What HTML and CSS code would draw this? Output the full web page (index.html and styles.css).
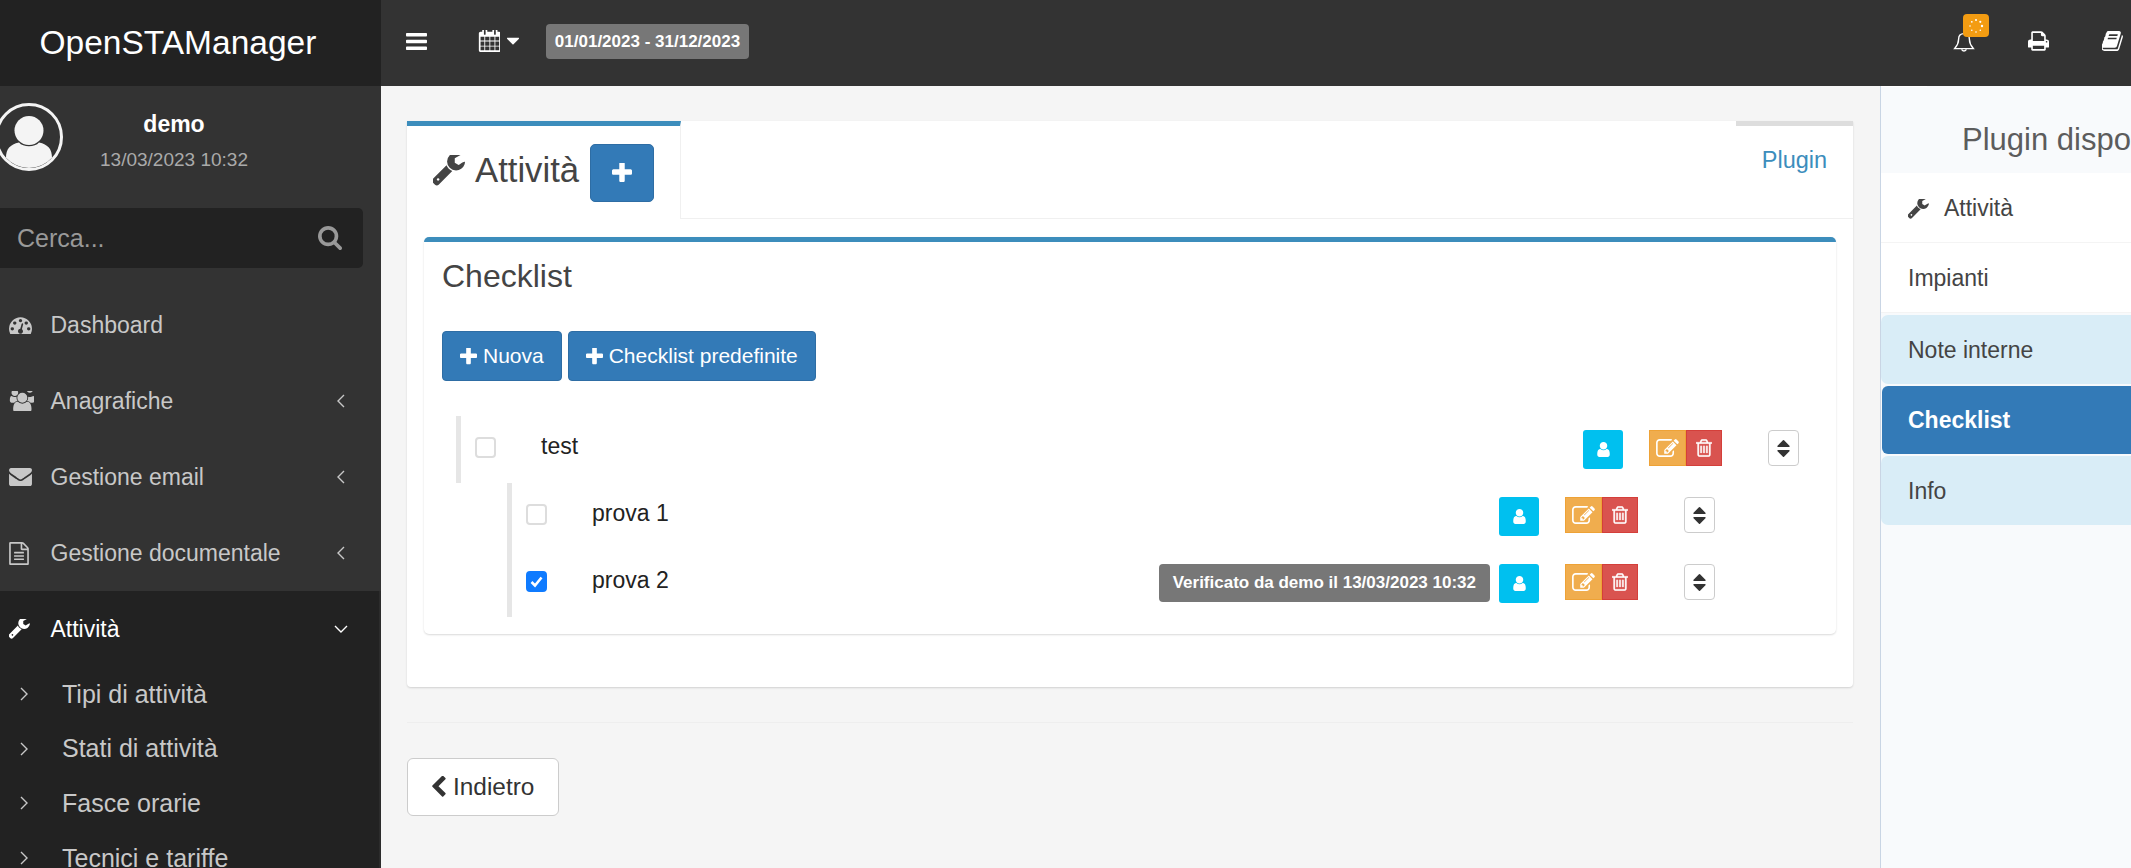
FILE: index.html
```html
<!DOCTYPE html>
<html lang="it">
<head>
<meta charset="utf-8">
<title>OpenSTAManager</title>
<link rel="stylesheet" href="styles.css">
</head>
<body>
<svg class="defs" xmlns="http://www.w3.org/2000/svg">
  <symbol id="i-wrench" viewBox="64 128 1600 1536"><path d="M384 1344q0-26-19-45t-45-19-45 19-19 45 19 45 45 19 45-19 19-45zm644-420l-682 682q-37 37-90 37-52 0-91-37l-106-108q-38-36-38-90 0-53 38-91l681-681q39 98 114.500 173.500t173.500 114.500zm634-435q0 39-23 106-47 134-164.500 217.500t-258.500 83.500q-185 0-316.500-131.500t-131.500-316.500 131.500-316.500 316.500-131.500q58 0 121.500 16.500t107.500 46.500q16 11 16 28t-16 28l-293 169v224l193 107q5-3 79-48.500t135.500-81 70.500-35.500q15 0 23.500 10t8.500 25z"/></symbol>
  <symbol id="i-plus" viewBox="192 192 1408 1408"><path d="M1600 736v192q0 40-28 68t-68 28h-416v416q0 40-28 68t-68 28h-192q-40 0-68-28t-28-68v-416h-416q-40 0-68-28t-28-68v-192q0-40 28-68t68-28h416v-416q0-40 28-68t68-28h192q40 0 68 28t28 68v416h416q40 0 68 28t28 68z"/></symbol>
  <symbol id="i-bars" viewBox="128 256 1536 1280" preserveAspectRatio="none"><path d="M1664 1344v128q0 26-19 45t-45 19h-1408q-26 0-45-19t-19-45v-128q0-26 19-45t45-19h1408q26 0 45 19t19 45zm0-512v128q0 26-19 45t-45 19h-1408q-26 0-45-19t-19-45v-128q0-26 19-45t45-19h1408q26 0 45 19t19 45zm0-512v128q0 26-19 45t-45 19h-1408q-26 0-45-19t-19-45v-128q0-26 19-45t45-19h1408q26 0 45 19t19 45z"/></symbol>
  <symbol id="i-search" viewBox="64 128 1664 1664"><path d="M1216 832q0-185-131.500-316.500t-316.500-131.500-316.500 131.500-131.500 316.500 131.500 316.500 316.500 131.500 316.500-131.500 131.500-316.500zm512 832q0 52-38 90t-90 38q-54 0-90-38l-343-342q-179 124-399 124-143 0-273.500-55.500t-225-150-150-225-55.500-273.500 55.500-273.500 150-225 225-150 273.500-55.500 273.500 55.500 225 150 150 225 55.500 273.500q0 220-124 399l343 343q37 37 37 90z"/></symbol>
  <symbol id="i-envelope" viewBox="0 256 1792 1408"><path d="M1792 710v794q0 66-47 113t-113 47h-1472q-66 0-113-47t-47-113v-794q44 49 101 87 362 246 497 345 57 42 92.500 65.500t94.500 48 110 24.500h2q51 0 110-24.500t94.500-48 92.500-65.500q170-123 498-345 57-39 100-87zm0-294q0 79-49 151t-122 123q-376 261-468 325-10 7-42.500 30.500t-54 38-52 32.500-57.500 27-50 9h-2q-23 0-50-9t-57.500-27-52-32.500-54-38-42.500-30.500q-91-64-262-182.500t-205-142.500q-62-42-117-115.500t-55-136.500q0-78 41.500-130t118.500-52h1472q65 0 112.500 47t47.500 113z"/></symbol>
  <symbol id="i-trash" viewBox="192 128 1408 1536"><path d="M704 736v576q0 14-9 23t-23 9h-64q-14 0-23-9t-9-23v-576q0-14 9-23t23-9h64q14 0 23 9t9 23zm256 0v576q0 14-9 23t-23 9h-64q-14 0-23-9t-9-23v-576q0-14 9-23t23-9h64q14 0 23 9t9 23zm256 0v576q0 14-9 23t-23 9h-64q-14 0-23-9t-9-23v-576q0-14 9-23t23-9h64q14 0 23 9t9 23zm128 724v-948h-896v948q0 22 7 40.500t14.500 27 10.500 8.500h832q3 0 10.500-8.500t14.500-27 7-40.500zm-672-1076h448l-48-117q-7-9-17-11h-317q-10 2-17 11zm928 32v64q0 14-9 23t-23 9h-96v948q0 83-47 143.500t-113 60.500h-832q-66 0-113-58.500t-47-141.500v-952h-96q-14 0-23-9t-9-23v-64q0-14 9-23t23-9h309l70-167q15-37 54-63t79-26h320q40 0 79 26t54 63l70 167h309q14 0 23 9t9 23z"/></symbol>
  <symbol id="i-chevron-left" viewBox="320 128 1152 1536"><path d="M1427 301l-531 531 531 531q19 19 19 45t-19 45l-166 166q-19 19-45 19t-45-19l-742-742q-19-19-19-45t19-45l742-742q19-19 45-19t45 19l166 166q19 19 19 45t-19 45z"/></symbol>
  <symbol id="i-user" viewBox="256 128 1280 1536"><path d="M1536 1399q0 109-62.500 187t-150.500 78h-854q-88 0-150.500-78t-62.500-187q0-85 8.500-160.500t31.500-152 58.500-131 94-89 134.500-34.500q131 128 313 128t313-128q76 0 134.500 34.500t94 89 58.500 131 31.500 152 8.500 160.500zm-256-887q0 159-112.500 271.500t-271.500 112.500-271.500-112.500-112.500-271.500 112.500-271.500 271.500-112.500 271.500 112.500 112.500 271.500z"/></symbol>
  <symbol id="i-edit" viewBox="0 128 1792 1408"><path d="M888 1184l116-116-152-152-116 116v56h96v96h56zm440-720q-16-16-33 1l-350 350q-17 17-1 33t33-1l350-350q17-17 1-33zm80 594v190q0 119-84.500 203.500t-203.500 84.500h-832q-119 0-203.500-84.500t-84.500-203.500v-832q0-119 84.500-203.500t203.500-84.500h832q63 0 117 25 15 7 18 23 3 17-9 29l-49 49q-14 14-32 8-23-6-45-6h-832q-66 0-113 47t-47 113v832q0 66 47 113t113 47h832q66 0 113-47t47-113v-126q0-13 9-22l64-64q15-15 35-7t20 29zm-96-738l288 288-672 672h-288v-288zm444 132l-92 92-288-288 92-92q28-28 68-28t68 28l152 152q28 28 28 68t-28 68z"/></symbol>
  <symbol id="i-sort" viewBox="384 192 1024 1408"><path d="M1408 1088q0 26-19 45l-448 448q-19 19-45 19t-45-19l-448-448q-19-19-19-45t19-45 45-19h896q26 0 45 19t19 45zm0-384q0 26-19 45t-45 19h-896q-26 0-45-19t-19-45 19-45l448-448q19-19 45-19t45 19l448 448q19 19 19 45z"/></symbol>
  <symbol id="i-caret" viewBox="384 640 1024 576"><path d="M1408 704q0 26-19 45l-448 448q-19 19-45 19t-45-19l-448-448q-19-19-19-45t19-45 45-19h896q26 0 45 19t19 45z"/></symbol>
  <symbol id="i-calendar" viewBox="0 128 1664 1664"><path d="M192 1664h288v-288h-288v288zm352 0h320v-288h-320v288zm-352-352h288v-320h-288v320zm352 0h320v-320h-320v320zm-352-384h288v-288h-288v288zm736 736h320v-288h-320v288zm-384-736h320v-288h-320v288zm768 736h288v-288h-288v288zm-384-352h320v-320h-320v320zm-352-864v-288q0-13-9.500-22.500t-22.500-9.500h-64q-13 0-22.500 9.500t-9.500 22.500v288q0 13 9.500 22.500t22.500 9.500h64q13 0 22.500-9.500t9.500-22.500zm736 864h288v-320h-288v320zm-384-384h320v-288h-320v288zm384 0h288v-288h-288v288zm32-480v-288q0-13-9.500-22.500t-22.500-9.500h-64q-13 0-22.500 9.500t-9.500 22.500v288q0 13 9.500 22.500t22.500 9.500h64q13 0 22.500-9.500t9.500-22.500zm384-64v1280q0 52-38 90t-90 38h-1408q-52 0-90-38t-38-90v-1280q0-52 38-90t90-38h128v-96q0-66 47-113t113-47h64q66 0 113 47t47 113v96h384v-96q0-66 47-113t113-47h64q66 0 113 47t47 113v96h128q52 0 90 38t38 90z"/></symbol>
  <symbol id="i-users" viewBox="-128 128 1920 1536"><path d="M529 896q-162 5-265 128h-134q-82 0-138-40.500t-56-118.500q0-353 124-353 6 0 43.500 21t97.500 42.500 119 21.500q67 0 133-23-5 37-5 66 0 139 81 256zm1071 637q0 120-73 189.500t-194 69.500h-874q-121 0-194-69.500t-73-189.500q0-53 3.500-103.500t14-109 26.500-108.500 43-97.500 62-81 85.500-53.500 111.500-20q10 0 43 21.500t73 48 107 48 135 21.500 135-21.500 107-48 73-48 43-21.500q61 0 111.500 20t85.500 53.500 62 81 43 97.500 26.500 108.500 14 109 3.500 103.500zm-1024-1277q0 106-75 181t-181 75-181-75-75-181 75-181 181-75 181 75 75 181zm704 384q0 159-112.500 271.500t-271.500 112.500-271.500-112.500-112.500-271.500 112.500-271.500 271.500-112.500 271.500 112.500 112.500 271.500zm576 225q0 78-56 118.500t-138 40.500h-134q-103-123-265-128 81-117 81-256 0-29-5-66 66 23 133 23 59 0 119-21.500t97.500-42.500 43.500-21q124 0 124 353zm-128-865q0 106-75 181t-181 75-181-75-75-181 75-181 181-75 181 75 75 181z"/></symbol>
  <symbol id="i-dashboard" viewBox="0 256 1792 1280"><path d="M384 1152q0-53-37.500-90.500t-90.500-37.500-90.500 37.500-37.500 90.500 37.500 90.500 90.500 37.500 90.500-37.500 37.500-90.500zm192-448q0-53-37.500-90.500t-90.500-37.500-90.500 37.500-37.500 90.500 37.500 90.500 90.500 37.500 90.500-37.500 37.500-90.500zm428 481l101-382q6-26-7.500-48.500t-38.500-29.500-48 6.500-30 39.500l-101 382q-60 5-107 43.500t-63 98.500q-20 77 20 146t117 89 146-20 89-117q16-60-6-117t-72-91zm660-33q0-53-37.500-90.500t-90.500-37.500-90.500 37.500-37.500 90.500 37.500 90.500 90.500 37.500 90.500-37.500 37.500-90.500zm-640-640q0-53-37.500-90.500t-90.500-37.500-90.500 37.500-37.500 90.500 37.500 90.500 90.500 37.500 90.500-37.500 37.500-90.500zm448 192q0-53-37.500-90.500t-90.500-37.500-90.500 37.500-37.500 90.500 37.500 90.500 90.500 37.500 90.500-37.500 37.500-90.500zm320 448q0 261-141 483-19 29-54 29h-1402q-35 0-54-29-141-221-141-483 0-182 71-348t191-286 286-191 348-71 348 71 286 191 191 286 71 348z"/></symbol>
  <symbol id="i-file" viewBox="128 0 1536 1792"><path d="M1596 380q28 28 48 76t20 88v1152q0 40-28 68t-68 28h-1344q-40 0-68-28t-28-68v-1600q0-40 28-68t68-28h896q40 0 88 20t76 48zm-444-244v376h376q-10-29-22-41l-313-313q-12-12-41-22zm384 1528v-1024h-416q-40 0-68-28t-28-68v-416h-768v1536h1280zm-1024-864q0-14 9-23t23-9h704q14 0 23 9t9 23v64q0 14-9 23t-23 9h-704q-14 0-23-9t-9-23v-64zm736 224q14 0 23 9t9 23v64q0 14-9 23t-23 9h-704q-14 0-23-9t-9-23v-64q0-14 9-23t23-9h704zm0 256q14 0 23 9t9 23v64q0 14-9 23t-23 9h-704q-14 0-23-9t-9-23v-64q0-14 9-23t23-9h704z"/></symbol>
  <symbol id="i-print" viewBox="64 128 1664 1536"><path d="M448 1536h896v-256h-896v256zm0-640h896v-384h-160q-40 0-68-28t-28-68v-160h-640v640zm1152 64q0-26-19-45t-45-19-45 19-19 45 19 45 45 19 45-19 19-45zm128 0v416q0 13-9.500 22.500t-22.500 9.500h-224v160q0 40-28 68t-68 28h-960q-40 0-68-28t-28-68v-160h-224q-13 0-22.500-9.500t-9.500-22.500v-416q0-79 56.500-135.500t135.500-56.500h64v-544q0-40 28-68t68-28h672q40 0 88 20t76 48l152 152q28 28 48 76t20 88v256h64q79 0 135.500 56.500t56.500 135.500z"/></symbol>
  <symbol id="i-book" viewBox="64 128 1600 1536"><path d="M1639 478q40 57 18 129l-275 906q-19 64-76.500 107.500t-122.500 43.500h-923q-77 0-148.500-53.500t-99.500-131.500q-24-67-2-127 0-4 3-27t4-37q1-8-3-21.500t-3-19.500q2-11 8-21t16.500-23.500 16.500-23.500q23-38 45-91.500t30-91.500q3-10 .5-30t-.5-28q3-11 17-28t17-23q21-36 42-92t25-90q1-9-2.500-32t.5-28q4-13 22-30.500t22-22.500q19-26 42.500-84.500t27.500-96.500q1-8-3-25.500t-2-26.500q2-8 9-18t18-23 17-21q8-12 16.500-30.500t15-35 16-36 19.500-32 26.500-23.500 36-11.500 47.500 5.500l-1 3q38-9 51-9h761q74 0 114 56t18 130l-274 906q-36 119-71.500 153.500t-128.500 34.500h-869q-27 0-38 15-11 16-1 43 24 70 144 70h923q29 0 56-15.500t35-41.500l300-987q7-22 5-57 38 15 59 43zm-1064 2q-4 13 2 22.500t20 9.500h608q13 0 25.500-9.500t16.500-22.500l21-64q4-13-2-22.500t-20-9.500h-608q-13 0-25.500 9.500t-16.500 22.500zm-83 256q-4 13 2 22.500t20 9.500h608q13 0 25.500-9.500t16.500-22.500l21-64q4-13-2-22.500t-20-9.500h-608q-13 0-25.500 9.500t-16.500 22.500z"/></symbol>
</svg>

<header class="topbar">
  <a class="logo">OpenSTAManager</a>
  <nav class="topnav">
    <svg class="ic-bars"><use href="#i-bars"/></svg>
    <svg class="ic-calendar"><use href="#i-calendar"/></svg>
    <svg class="ic-caret"><use href="#i-caret"/></svg>
    <span class="date-range">01/01/2023 - 31/12/2023</span>
    <div class="top-right">
      <span class="bell">
        <svg class="ic-bell" viewBox="0 0 22 22"><path d="M11 2.600C7.600 2.600 5.600 5 5.600 8.200 5.600 13 3.400 15.400 1.600 17.600H20.400C18.600 15.400 16.400 13 16.400 8.200 16.400 5 14.400 2.600 11 2.600Z"/><path d="M8.800 18.200C9 20.600 13 20.600 13.200 18.200"/></svg>
        <span class="badge">
          <svg class="ic-spin" viewBox="0 0 16 16"><circle cx="8" cy="2" r="1"/><circle cx="12.300" cy="3.800" r="1.100"/><circle cx="14" cy="8" r="1.200"/><circle cx="12.300" cy="12.200" r=".8"/><circle cx="8" cy="14" r=".8"/><circle cx="3.800" cy="12.200" r=".8"/><circle cx="2" cy="8" r=".8"/><circle cx="3.800" cy="3.800" r=".9"/></svg>
        </span>
      </span>
      <svg class="ic-print"><use href="#i-print"/></svg>
      <svg class="ic-book"><use href="#i-book"/></svg>
    </div>
  </nav>
</header>

<div class="layout">
  <aside class="sidebar">
    <div class="user">
      <svg class="avatar" viewBox="0 0 68 68">
        <circle cx="34" cy="34" r="32.500" class="avatar-ring"/>
        <circle cx="34" cy="27.500" r="14.500"/>
        <path d="M11 54.800C11 46 15 41.500 24 39.500 28 44.500 40 44.500 44 39.500 53 41.500 57 46 57 54.800A31 31 0 0 1 11 54.800Z"/>
      </svg>
      <div class="user-info">
        <div class="user-name">demo</div>
        <div class="user-date">13/03/2023 10:32</div>
      </div>
    </div>
    <div class="search">
      <span>Cerca...</span>
      <svg class="ic-search"><use href="#i-search"/></svg>
    </div>
    <ul class="menu">
      <li class="menu-item"><span class="menu-ic"><svg class="ic-gauge"><use href="#i-dashboard"/></svg></span>Dashboard</li>
      <li class="menu-item"><span class="menu-ic"><svg class="ic-users"><use href="#i-users"/></svg></span>Anagrafiche<svg class="chev-left" viewBox="0 0 8 14"><path d="M7 1 1 7l6 6"/></svg></li>
      <li class="menu-item"><span class="menu-ic"><svg class="ic-mail"><use href="#i-envelope"/></svg></span>Gestione email<svg class="chev-left" viewBox="0 0 8 14"><path d="M7 1 1 7l6 6"/></svg></li>
      <li class="menu-item"><span class="menu-ic"><svg class="ic-file"><use href="#i-file"/></svg></span>Gestione documentale<svg class="chev-left" viewBox="0 0 8 14"><path d="M7 1 1 7l6 6"/></svg></li>
      <li class="menu-active">
        <div class="menu-item menu-item-active"><span class="menu-ic"><svg class="ic-wrench-nav"><use href="#i-wrench"/></svg></span>Attività<svg class="chev-down" viewBox="0 0 14 8"><path d="M1 1l6 6 6-6"/></svg></div>
        <ul class="submenu">
          <li class="sub-item"><svg class="chev-right" viewBox="0 0 8 14"><path d="M1 1l6 6-6 6"/></svg>Tipi di attività</li>
          <li class="sub-item"><svg class="chev-right" viewBox="0 0 8 14"><path d="M1 1l6 6-6 6"/></svg>Stati di attività</li>
          <li class="sub-item"><svg class="chev-right" viewBox="0 0 8 14"><path d="M1 1l6 6-6 6"/></svg>Fasce orarie</li>
          <li class="sub-item"><svg class="chev-right" viewBox="0 0 8 14"><path d="M1 1l6 6-6 6"/></svg>Tecnici e tariffe</li>
        </ul>
      </li>
    </ul>
  </aside>

  <main class="content">
    <section class="tabs">
      <div class="tab-head">
        <div class="tab-title">
          <svg class="ic-wrench-title"><use href="#i-wrench"/></svg>
          <span class="tab-title-text">Attività</span>
          <a class="btn-add"><svg class="ic-plus-lg"><use href="#i-plus"/></svg></a>
        </div>
        <div class="tab-gap"></div>
        <a class="tab-plugin">Plugin</a>
      </div>
      <div class="tab-body">
        <div class="box">
          <h3 class="box-title">Checklist</h3>
          <div class="box-buttons">
            <a class="btn-primary"><svg class="ic-plus"><use href="#i-plus"/></svg>Nuova</a>
            <a class="btn-primary"><svg class="ic-plus"><use href="#i-plus"/></svg>Checklist predefinite</a>
          </div>
          <div class="check-list">
            <div class="check-row">
              <span class="check"></span>
              <span class="check-text">test</span>
              <div class="actions">
                <a class="btn-info"><svg class="ic-user"><use href="#i-user"/></svg></a>
                <div class="btn-pair">
                  <a class="btn-edit"><svg class="ic-edit"><use href="#i-edit"/></svg></a>
                  <a class="btn-del"><svg class="ic-trash"><use href="#i-trash"/></svg></a>
                </div>
                <a class="btn-sort"><svg class="ic-sort"><use href="#i-sort"/></svg></a>
              </div>
            </div>
            <div class="check-sub">
              <div class="check-row check-row-sub">
                <span class="check"></span>
                <span class="check-text">prova 1</span>
                <div class="actions">
                  <a class="btn-info"><svg class="ic-user"><use href="#i-user"/></svg></a>
                  <div class="btn-pair">
                    <a class="btn-edit"><svg class="ic-edit"><use href="#i-edit"/></svg></a>
                    <a class="btn-del"><svg class="ic-trash"><use href="#i-trash"/></svg></a>
                  </div>
                  <a class="btn-sort"><svg class="ic-sort"><use href="#i-sort"/></svg></a>
                </div>
              </div>
              <div class="check-row check-row-sub">
                <span class="check check-on"><svg viewBox="0 0 21 21"><path d="M5.500 11l3.500 3.500 6.500-8"/></svg></span>
                <span class="check-text">prova 2</span>
                <div class="actions">
                  <span class="verified">Verificato da demo il 13/03/2023 10:32</span>
                  <a class="btn-info"><svg class="ic-user"><use href="#i-user"/></svg></a>
                  <div class="btn-pair">
                    <a class="btn-edit"><svg class="ic-edit"><use href="#i-edit"/></svg></a>
                    <a class="btn-del"><svg class="ic-trash"><use href="#i-trash"/></svg></a>
                  </div>
                  <a class="btn-sort"><svg class="ic-sort"><use href="#i-sort"/></svg></a>
                </div>
              </div>
            </div>
          </div>
        </div>
      </div>
    </section>
    <hr class="divider">
    <a class="btn-back"><svg class="ic-back"><use href="#i-chevron-left"/></svg>Indietro</a>
  </main>

  <aside class="plugins">
    <div class="plugins-notch"></div>
    <h4 class="plugins-title">Plugin disponibili</h4>
    <ul class="plugin-list">
      <li class="plugin plugin-plain"><svg class="ic-wrench-plugin"><use href="#i-wrench"/></svg>Attività</li>
      <li class="plugin plugin-plain plugin-last">Impianti</li>
      <li class="plugin plugin-light">Note interne</li>
      <li class="plugin plugin-current">Checklist</li>
      <li class="plugin plugin-light">Info</li>
    </ul>
  </aside>
</div>
</body>
</html>
```

FILE: styles.css
```css
* { box-sizing: border-box; }
html, body { margin: 0; height: 100%; }
body {
  overflow: hidden;
  font-family: "Liberation Sans", Arial, sans-serif;
  font-size: 23px;
  color: #333;
  background: #f5f5f5;
}
ul { list-style: none; margin: 0; padding: 0; }
.defs { display: none; }
svg { fill: currentColor; flex: none; display: block; }

/* top bar */
.topbar { display: flex; height: 86px; background: #333; color: #fff; }
.logo {
  width: 381px; flex: none; background: #222; color: #fff;
  font-size: 33.500px; line-height: 86px; padding-left: 39.500px;
}
.topnav { flex: 1; display: flex; align-items: center; padding: 0 8px 4px 25px; }
.ic-bars { width: 21px; height: 17px; }
.ic-calendar { width: 22px; height: 22px; margin-left: 51px; }
.ic-caret { width: 12px; height: 8px; margin-left: 7px; }
.date-range {
  margin-left: 27px; width: 203px; height: 35px; line-height: 35px;
  background: #777; border-radius: 4px; text-align: center;
  font-size: 17px; font-weight: 700;
}
.top-right { margin-left: auto; display: flex; align-items: center; }
.bell { position: relative; display: block; width: 22px; height: 22px; margin-top: 2px; }
.ic-bell { width: 22px; height: 22px; fill: none; stroke: #fff; stroke-width: 1.400; }
.badge {
  position: absolute; left: 10px; top: -17px; width: 26px; height: 23px;
  background: #f39c12; border-radius: 4px;
  display: flex; align-items: center; justify-content: center;
}
.ic-spin { width: 16px; height: 16px; fill: #fff; }
.ic-print { width: 21px; height: 20px; margin-left: 53px; }
.ic-book { width: 21px; height: 20px; margin-left: 53px; }

/* layout */
.layout { display: flex; height: 782px; }

/* sidebar */
.sidebar { width: 381px; flex: none; background: #333; overflow: hidden; color: #c8c8c8; }
.user { display: flex; height: 122px; padding-top: 17px; }
.avatar { width: 68px; height: 68px; margin-left: -5px; fill: #f4f4f4; }
.avatar-ring { fill: none; stroke: #f4f4f4; stroke-width: 3; }
.user-info { width: 222px; text-align: center; padding-top: 8px; }
.user-name { font-weight: 700; font-size: 23px; line-height: 26px; color: #fff; }
.user-date { font-size: 19px; line-height: 26px; margin-top: 10px; color: #aaa; }
.search {
  width: 363px; height: 60px; background: #222; border-radius: 0 5px 5px 0;
  display: flex; align-items: center; justify-content: space-between;
  padding: 0 21px 0 17px; font-size: 25px; color: #999;
}
.ic-search { width: 24px; height: 24px; color: #999; }
.menu { margin-top: 19px; }
.menu-item { display: flex; align-items: center; height: 76px; padding: 0 36px 0 9px; font-size: 23px; }
.menu-ic { width: 41.500px; display: flex; flex: none; }
.menu-item-active { color: #fff; padding-right: 31px; }
.menu-active { background: #222; height: 400px; border-right: 2px solid #2c2c2c; }
.ic-gauge { width: 23px; height: 17px; }
.ic-users { width: 25px; height: 20px; }
.ic-mail { width: 23px; height: 18px; }
.ic-file { width: 20px; height: 23px; }
.ic-wrench-nav { width: 21px; height: 20px; }
.chev-left, .chev-right, .chev-down { fill: none; stroke: currentColor; stroke-width: 1.400; }
.chev-left { width: 8px; height: 14px; margin-left: auto; }
.chev-down { width: 14px; height: 8px; margin-left: auto; }
.chev-right { width: 8px; height: 14px; margin-right: 34px; }
.sub-item { display: flex; align-items: center; height: 54.600px; padding-left: 20px; font-size: 25px; }

/* main */
.content { flex: 1; min-width: 0; padding: 35px 27px 0 26px; }
.tabs { background: #fff; border-radius: 0 0 4px 4px; box-shadow: 0 1px 2px rgba(0,0,0,.15); }
.tab-head { display: flex; height: 98px; }
.tab-title {
  width: 274px; border-top: 5px solid #3c8dbc; border-right: 1px solid #f0f0f0;
  display: flex; padding: 18px 0 0 26px;
}
.ic-wrench-title { width: 32px; height: 31px; color: #444; margin-top: 11px; }
.tab-title-text { font-size: 34.700px; line-height: 40px; margin: 6px 0 0 10px; color: #444; }
.btn-add {
  width: 64px; height: 58px; background: #337ab7; border: 1px solid #2e6da4;
  border-radius: 5px; margin-left: 11px; color: #fff;
  display: flex; align-items: center; justify-content: center;
}
.ic-plus-lg { width: 20px; height: 20px; }
.tab-gap { flex: 1; border-bottom: 1px solid #f0f0f0; }
.tab-plugin {
  width: 117px; border-top: 5px solid #ddd; border-bottom: 1px solid #f0f0f0;
  color: #3c8dbc; font-size: 23.500px; text-align: center; line-height: 28px; padding: 20px 0 0 0;
}
.tab-body { padding: 18px 17px 53px; }
.box {
  height: 397px; background: #fff; border-top: 5px solid #3c8dbc; border-radius: 5px;
  box-shadow: 0 1px 2px rgba(0,0,0,.15); padding: 14px 18px 0;
}
.box-title { margin: 0; font-size: 32px; font-weight: 400; line-height: 40px; color: #444; }
.box-buttons { display: flex; gap: 6px; margin-top: 35px; }
.btn-primary {
  height: 50px; background: #337ab7; border: 1px solid #2e6da4; border-radius: 4px;
  color: #fff; font-size: 21px; display: flex; align-items: center; padding: 0 17px 0 17px;
}
.ic-plus { width: 17px; height: 17px; margin-right: 6px; }
.check-list { margin: 35px 0 0 14px; }
.check-row {
  display: flex; align-items: center; height: 67px; border-left: 5px solid #e6e6e6;
  padding-left: 14px; padding-right: 19px;
}
.check-sub { margin: 0 84px 0 51px; border-left: 5px solid #e6e6e6; }
.check-row-sub { border-left: 0; }
.check {
  display: block; width: 21px; height: 21px; border: 2px solid #ddd; border-radius: 4px;
  background: #fff; margin-bottom: 4px; flex: none;
}
.check-on { background: #0f7bff; border-color: #0f7bff; }
.check-on svg { width: 21px; height: 21px; margin: -2px; fill: none; stroke: #fff; stroke-width: 2.600; }
.check-text { font-size: 23px; color: #222; margin: 0 0 6px 45px; }
.actions { margin-left: auto; display: flex; align-items: flex-start; height: 39px; }
.verified {
  height: 38px; line-height: 38px; background: #777; color: #fff; border-radius: 4px;
  font-size: 17px; font-weight: 700; padding: 0 14px; margin-right: 9px; white-space: nowrap;
}
.btn-info {
  width: 40px; height: 39px; background: #00c0ef; border-radius: 3px; color: #fff;
  display: flex; align-items: center; justify-content: center;
}
.btn-pair { display: flex; margin-left: 26px; }
.btn-edit, .btn-del {
  height: 36px; display: flex; align-items: center; justify-content: center; color: #fff;
}
.btn-edit { width: 37px; background: #f0ad4e; border: 1px solid #eea236; }
.btn-del { width: 36px; background: #d9534f; border: 1px solid #d43f3a; }
.btn-sort {
  width: 31px; height: 36px; margin-left: 46px; background: #fff; border: 1px solid #ccc;
  border-radius: 4px; color: #333;
  display: flex; align-items: center; justify-content: center;
}
.ic-user { width: 13px; height: 15px; }
.ic-edit { width: 23px; height: 18px; }
.ic-trash { width: 16px; height: 18px; stroke: #fff; stroke-width: 24px; }
.ic-sort { width: 13px; height: 17px; }
.divider { margin: 35px 0 35px; border: 0; border-top: 1px solid #eee; }
.btn-back {
  width: 152px; height: 58px; display: flex; align-items: center; padding-left: 23px;
  background: #fff; border: 1px solid #ccc; border-radius: 6px; color: #333; font-size: 24.400px;
}
.ic-back { width: 15px; height: 22px; margin-right: 7px; }

/* plugins panel */
.plugins {
  width: 251px; flex: none; background: #f8fafc; border-left: 1px solid #c9d5e4;
  overflow: hidden; position: relative;
}
.plugins-notch { position: absolute; left: 0; top: 0; width: 46px; height: 1px; background: #fff; }
.plugins-title {
  margin: 0; height: 87px; padding-left: 81px; font-size: 31px; font-weight: 400;
  line-height: 108px; color: #5c5c5c; white-space: nowrap;
}
.plugin { display: flex; align-items: center; padding: 2px 0 0 27px; font-size: 23px; color: #444; }
.plugin-plain { background: #fff; height: 70px; border-bottom: 1px solid #f4f4f4; }
.plugin-last { margin-bottom: 2px; }
.ic-wrench-plugin { width: 21px; height: 20px; margin-right: 15px; color: #444; }
.plugin-light { background: #d9edf7; height: 69px; border-radius: 7px 0 0 7px; margin-bottom: 2px; }
.plugin-current {
  background: #337ab7; color: #fff; font-weight: 700; height: 68px; padding: 0 0 0 26px;
  border-radius: 6px 0 0 6px; margin: 0 0 2px 1px;
}
```
